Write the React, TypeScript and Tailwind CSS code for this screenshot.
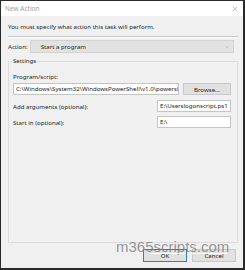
import React from 'react';
import { X, ChevronDown } from 'lucide-react';

export default function App() {
  return (
    <div className="relative w-[245px] h-[270px] bg-[#2a2a2a] pt-px pl-px pr-[2px] pb-[2px] font-['Noto_Sans',sans-serif] text-[6.1px] text-[#1b1b1b]">
      <div className="h-full flex flex-col bg-[#f0f0f0]">
        {/* title bar */}
        <div className="h-[15px] bg-white flex items-center justify-between pl-[4px] pr-[4px]">
          <span className="text-[6.5px] text-[#a0a0a0] leading-[9px]">New Action</span>
          <X className="w-[8px] h-[8px] text-[#8a8a8a]" strokeWidth={1.5} />
        </div>

        <div className="flex-1 flex flex-col pl-[7px] pr-[5px]">
          <p className="mt-[6px] leading-[9px]">You must specify what action this task will perform.</p>
          <div className="mt-[5px] h-[2px] bg-[#c6c6c6] border-b border-white" />

          {/* action */}
          <div className="mt-[2px] mr-[4px] flex items-center gap-[2px]">
            <span className="shrink-0 whitespace-nowrap leading-[9px]">Action:</span>
            <div className="flex-1 h-[13px] bg-[#e2e2e2] border border-[#d2d2d2] flex items-center justify-between pl-[10px] pr-[3px]">
              <span className="leading-[9px]">Start a program</span>
              <ChevronDown className="w-[6px] h-[6px] text-[#9a9a9a]" strokeWidth={2} />
            </div>
          </div>

          {/* settings group */}
          <fieldset className="mt-[4px] flex-1 border border-[#dcdcdc] pl-[4px] pr-[6px]">
            <legend className="-ml-px px-px leading-[8px]">Settings</legend>
            <p className="mt-[7px] leading-[9px]">Program/script:</p>
            <div className="mt-[2px] flex gap-[4px]">
              <div className="w-[166px] h-[12px] shrink-0 bg-white border border-[#c4c4c4] pl-[2px] overflow-hidden whitespace-nowrap leading-[10px]">
                C:\Windows\System32\WindowsPowerShell\v1.0\powershe
              </div>
              <div className="w-[48px] h-[12px] bg-[#e1e1e1] border border-[#c8c8c8] flex items-center justify-center leading-[9px]">
                Browse...
              </div>
            </div>
            <div className="mt-[5px] flex items-center justify-between">
              <span className="leading-[9px]">Add arguments (optional):</span>
              <div className="w-[74px] h-[12px] bg-white border border-[#c4c4c4] pl-[2px] leading-[10px] whitespace-nowrap overflow-hidden">
                E:\Userslogonscript.ps1
              </div>
            </div>
            <div className="mt-[4px] flex items-center justify-between">
              <span className="leading-[9px]">Start in (optional):</span>
              <div className="w-[74px] h-[12px] bg-white border border-[#c4c4c4] pl-[2px] leading-[10px]">E:\</div>
            </div>
          </fieldset>

          {/* footer buttons */}
          <div className="mt-[6px] mb-[6px] mr-[2px] flex justify-end gap-[5px]">
            <div className="w-[44px] h-[13px] bg-[#e1e1e1] border-[1.5px] border-[#2a7fd4] flex items-center justify-center leading-[9px]">
              OK
            </div>
            <div className="w-[44px] h-[13px] bg-[#e1e1e1] border border-[#cacaca] flex items-center justify-center leading-[9px]">
              Cancel
            </div>
          </div>
        </div>
      </div>

      {/* watermark */}
      <div className="absolute left-[116px] top-[239px] text-[15px] leading-none font-['Liberation_Sans',sans-serif] text-[#7c7c7c]/80">
        m365scripts.com
      </div>
      <div className="absolute left-[150px] top-[253px] w-[36px] h-px bg-white" />
      <div className="absolute left-[192px] top-[253px] w-[35px] h-px bg-white" />
    </div>
  );
}
